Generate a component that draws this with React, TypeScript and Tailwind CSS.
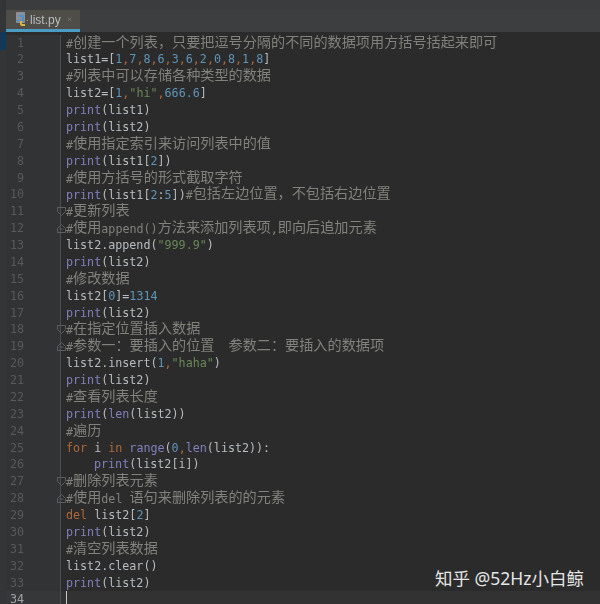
import React from "react";

const G = "text-[#81817d]"; // comment
const W = "text-[#b8bcc0]";
const P = "text-[#8080bc]";
const N = "text-[#5f94b8]";
const S = "text-[#6a8759]";
const O = "text-[#b0693a]";

type T = [string, string?];
type L = { t: T[]; f?: "top" | "bottom"; indent?: boolean };

const lines: L[] = [
  { t: [["#创建一个列表，只要把逗号分隔的不同的数据项用方括号括起来即可", G]] },
  { t: [["list1=[", W], ["1", N], [",", O], ["7", N], [",", O], ["8", N], [",", O], ["6", N], [",", O], ["3", N], [",", O], ["6", N], [",", O], ["2", N], [",", O], ["0", N], [",", O], ["8", N], [",", O], ["1", N], [",", O], ["8", N], ["]", W]] },
  { t: [["#列表中可以存储各种类型的数据", G]] },
  { t: [["list2=[", W], ["1", N], [",", O], ['"hi"', S], [",", O], ["666.6", N], ["]", W]] },
  { t: [["print", P], ["(list1)", W]] },
  { t: [["print", P], ["(list2)", W]] },
  { t: [["#使用指定索引来访问列表中的值", G]] },
  { t: [["print", P], ["(list1[", W], ["2", N], ["])", W]] },
  { t: [["#使用方括号的形式截取字符", G]] },
  { t: [["print", P], ["(list1[", W], ["2", N], [":", W], ["5", N], ["])", W], ["#包括左边位置，不包括右边位置", G]] },
  { t: [["#更新列表", G]], f: "top" },
  { t: [["#使用append()方法来添加列表项,即向后追加元素", G]], f: "bottom" },
  { t: [["list2.append(", W], ['"999.9"', S], [")", W]] },
  { t: [["print", P], ["(list2)", W]] },
  { t: [["#修改数据", G]] },
  { t: [["list2[", W], ["0", N], ["]=", W], ["1314", N]] },
  { t: [["print", P], ["(list2)", W]] },
  { t: [["#在指定位置插入数据", G]], f: "top" },
  { t: [["#参数一：要插入的位置  参数二：要插入的数据项", G]], f: "bottom" },
  { t: [["list2.insert(", W], ["1", N], [",", O], ['"haha"', S], [")", W]] },
  { t: [["print", P], ["(list2)", W]] },
  { t: [["#查看列表长度", G]] },
  { t: [["print", P], ["(", W], ["len", P], ["(list2))", W]] },
  { t: [["#遍历", G]] },
  { t: [["for ", O], ["i ", W], ["in ", O], ["range", P], ["(", W], ["0", N], [",", O], ["len", P], ["(list2)):", W]] },
  { t: [["print", P], ["(list2[i])", W]], indent: true },
  { t: [["#删除列表元素", G]], f: "top" },
  { t: [["#使用del 语句来删除列表的的元素", G]], f: "bottom" },
  { t: [["del ", O], ["list2[", W], ["2", N], ["]", W]] },
  { t: [["print", P], ["(list2)", W]] },
  { t: [["#清空列表数据", G]] },
  { t: [["list2.clear()", W]] },
  { t: [["print", P], ["(list2)", W]] },
];

function Run({ text, cls }: { text: string; cls?: string }) {
  const parts = text.split(/([\u3000-\u9fff\uff00-\uffef]+)/).filter(Boolean);
  return (
    <span className={cls}>
      {parts.map((p, i) =>
        /[\u3000-\u9fff\uff00-\uffef]/.test(p) ? (
          <span key={i} lang="zh-CN" className="relative top-[-1px] text-[14.15px] leading-none font-['Noto_Sans_CJK_SC']">
            {p}
          </span>
        ) : (
          <span key={i}>{p}</span>
        )
      )}
    </span>
  );
}

function Fold({ kind }: { kind: "top" | "bottom" }) {
  return (
    <svg width="11" height="11" viewBox="0 0 11 11" fill="none" stroke="#5c5f61" strokeWidth="1" className="absolute left-[-5px] top-[3px]">
      {kind === "top" ? <path d="M1.5 1.5H9.5V5.5L5.5 9.5L1.5 5.5Z" /> : <path d="M1.5 9.5H9.5V5.5L5.5 1.5L1.5 5.5Z M3.5 6H7.5" />}
    </svg>
  );
}

function PyIcon() {
  return (
    <svg width="14" height="16" viewBox="0 0 14 16">
      <rect x="1" y="0" width="9" height="11" fill="#8a9099" rx="1" />
      <path d="M1 8h6V5H4V3h3a2 2 0 0 1 2 2v4H3a2 2 0 0 0-2 2Z" fill="#4f8fc4" />
      <path d="M13 9H7v3h3v2H7a2 2 0 0 1-2-2V9h6a2 2 0 0 0 2-2Z" fill="#e0b53c" />
    </svg>
  );
}

export default function App() {
  return (
    <div className="relative w-[600px] h-[604px] overflow-hidden bg-[#2b2b2b] flex font-['DejaVu_Sans_Mono','Noto_Sans_CJK_SC',monospace]">
      <div className="w-[6px] bg-[#333537] shrink-0 flex flex-col pt-[32px]">
        <div className="h-[18px] bg-[#123a58]" />
      </div>
      <div className="flex-1 flex flex-col min-w-0 blur-[0.5px]">
        <div className="h-[10px] bg-[#3a3c3e] shrink-0" />
        <div className="h-[22px] bg-[#3c3e40] shrink-0 flex">
          <div className="w-[74px] bg-[#4e4d48] border-b-[3px] border-[#4a9cc4] flex items-center pl-[9px] gap-[1px]">
            <PyIcon />
            <span className="text-[12px] text-[#b9bcbf] font-['Liberation_Sans',sans-serif]">list.py</span>
            <span className="text-[9px] text-[#6c6f71] ml-[5px]">×</span>
          </div>
        </div>
        <div className="flex-1 flex flex-col pt-[2.5px] min-h-0">
          {lines.map((l, i) => (
            <div key={i} className="flex h-[16.875px] shrink-0 text-[11.7px] leading-[16.875px] whitespace-pre">
              <div className="w-[54px] bg-[#313335] text-[#58595b] pr-[36px] text-right shrink-0">{i + 1}</div>
              <div className={`relative flex-1 border-l border-[#4b4d4e] ${l.indent ? "pl-[33px]" : "pl-[5px]"}`}>
                {l.f && <Fold kind={l.f} />}
                {l.t.map((s, j) => (
                  <Run key={j} text={s[0]} cls={s[1]} />
                ))}
              </div>
            </div>
          ))}
          <div className="flex flex-1 text-[11.7px] leading-[16.875px] bg-[#323232]">
            <div className="w-[54px] bg-[#353739] text-[#a0a4a6] pr-[36px] text-right shrink-0">34</div>
            <div className="flex-1 border-l border-[#4b4d4e] pl-[5px]">
              <div className="w-px h-[14px] bg-[#c8c8c8]" />
            </div>
          </div>
        </div>
      </div>
      <div className="absolute right-[16px] bottom-[16px] text-[17.5px] leading-[20px] text-[#e6e6e6] font-['Noto_Sans','Noto_Sans_CJK_SC',sans-serif]">
        知乎 @52Hz小白鲸
      </div>
    </div>
  );
}
